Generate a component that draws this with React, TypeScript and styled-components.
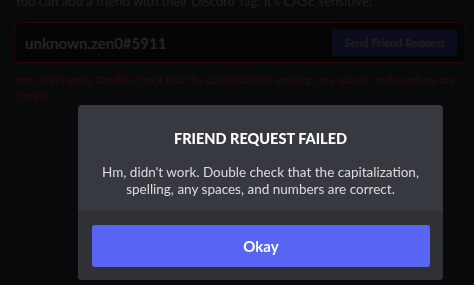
import styled, { createGlobalStyle } from "styled-components";

const GlobalStyle = createGlobalStyle`
  html, body {
    margin: 0;
    padding: 0;
    background: #36393f;
    font-family: Lato, "Open Sans", sans-serif;
    overflow: hidden;
  }
`;

const App = () => {
  return (
    <>
      <GlobalStyle />
      <AddFriendWrap>
        <p className='hint'>You can add a friend with their Discord Tag. It's CASE sensitive!</p>
        <InputBox>
          <input defaultValue='unknown.zen0#5911' />
          <button>Send Friend Request</button>
        </InputBox>
        <p className='error'>
          Hm, didn't work. Double check that the capitalization, spelling, any spaces, and numbers are correct.
        </p>
      </AddFriendWrap>
      <Overlay>
        <Modal>
          <ModalBody>
            <h2>FRIEND REQUEST FAILED</h2>
            <p>
              Hm, didn't work. Double check that the capitalization,
              <br />
              spelling, any spaces, and numbers are correct.
            </p>
          </ModalBody>
          <ModalFooter>
            <button>Okay</button>
          </ModalFooter>
        </Modal>
      </Overlay>
    </>
  );
};

const AddFriendWrap = styled.div`
  width: 474px;
  height: 285px;
  padding: 0 6px 0 14px;
  box-sizing: border-box;
  margin-top: -8px;

  .hint {
    margin: 0 0 12px;
    font-size: 13px;
    line-height: 18px;
    color: #b9bbbe;
  }

  .error {
    margin: 9px 0 0;
    font-size: 11px;
    line-height: 16px;
    color: #ed4245;
  }
`;

const InputBox = styled.div`
  width: 452px;
  height: 41px;
  box-sizing: border-box;
  display: flex;
  align-items: center;
  justify-content: space-between;
  padding: 0 8px 0 10px;
  border: 1px solid #ed4245;
  border-radius: 6px;
  background-color: #202225;

  input {
    width: 280px;
    padding: 0;
    border: 0;
    background: transparent;
    color: #dcddde;
    font-family: Lato, "Open Sans", sans-serif;
    font-size: 15px;
    font-weight: 700;
  }

  button {
    width: 125px;
    height: 27px;
    padding: 0;
    border: 0;
    border-radius: 3px;
    background-color: #5865f2;
    color: #ffffff;
    font-family: Lato, "Open Sans", sans-serif;
    font-size: 11px;
    font-weight: 700;
    white-space: nowrap;
    opacity: 0.7;
  }
`;

const Overlay = styled.div`
  position: fixed;
  inset: 0;
  background-color: rgba(0, 0, 0, 0.84);
  padding: 105px 0 0 78px;
  box-sizing: border-box;
`;

const Modal = styled.div`
  width: 365px;
  height: 175px;
  display: flex;
  flex-direction: column;
  border-radius: 4px;
  overflow: hidden;
  background-color: #36393f;
`;

const ModalBody = styled.div`
  height: 106px;
  box-sizing: border-box;
  padding-top: 24px;
  text-align: center;

  h2 {
    margin: 0 0 15px;
    font-size: 14.5px;
    line-height: 20px;
    font-weight: 900;
    color: #ffffff;
  }

  p {
    margin: 0;
    font-size: 13.5px;
    line-height: 17px;
    color: #dcddde;
  }
`;

const ModalFooter = styled.div`
  flex: 1;
  padding: 14px 13px 0 14px;
  background-color: #2f3136;

  button {
    width: 100%;
    height: 42px;
    border: 0;
    border-radius: 3px;
    background-color: #5865f2;
    color: #ffffff;
    font-family: Lato, "Open Sans", sans-serif;
    font-size: 15px;
    font-weight: 700;
  }
`;

export default App;
